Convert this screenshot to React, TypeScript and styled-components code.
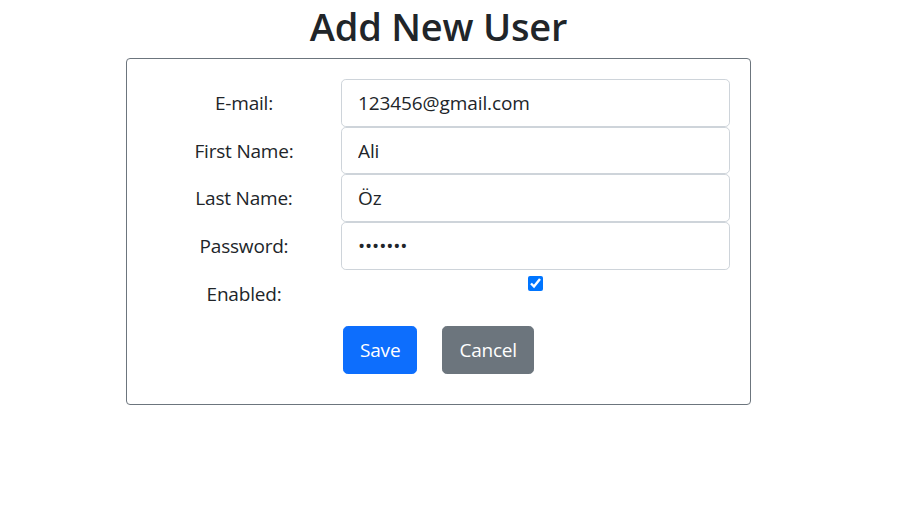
import React from "react";
import styled, { createGlobalStyle } from "styled-components";

const GlobalStyle = createGlobalStyle`
  html, body { margin: 0; padding: 0; background: #fff; }
  body {
    font-family: "Open Sans", "Noto Sans", "Liberation Sans", sans-serif;
    color: #212529;
  }
  * { box-sizing: border-box; }
`;

const Wrapper = styled.div`
  width: 625px;
  margin-left: 126px;
`;

const Title = styled.h1`
  margin: 0 0 6px;
  font-size: 38px;
  font-weight: 600;
  line-height: 52px;
  text-align: center;
  letter-spacing: -0.2px;
`;

const Card = styled.form`
  border: 1px solid #6c757d;
  border-radius: 4px;
  padding: 20px 20px 20px;
`;

const FormRow = styled.div`
  display: grid;
  grid-template-columns: 194px 1fr;
`;

const Label = styled.label`
  display: block;
  font-size: 19px;
  line-height: 30px;
  padding: 9px 0 8px;
  text-align: center;
  letter-spacing: -0.2px;
`;

const Input = styled.input`
  display: block;
  width: 100%;
  height: 47.7px;
  padding: 8px 16px;
  font-family: inherit;
  font-size: 19px;
  color: #212529;
  border: 1px solid #ced4da;
  border-radius: 4.8px;
  background: #fff;
  outline: none;
  letter-spacing: -0.1px;
`;

const CheckCell = styled.div`
  display: flex;
  justify-content: center;
  align-items: flex-start;
  padding-top: 6px;
`;

const Check = styled.input`
  width: 15px;
  height: 15px;
  margin: 0 0 0 -1px;
`;

const Actions = styled.div`
  display: flex;
  justify-content: center;
  gap: 25px;
  margin: 9px 0 10px;
`;

const Button = styled.button<{ $variant: "primary" | "secondary" }>`
  font-family: inherit;
  font-size: 19px;
  line-height: 30px;
  padding: 8px 16px;
  color: #fff;
  border: 1px solid ${(p) => (p.$variant === "primary" ? "#0d6efd" : "#6c757d")};
  background: ${(p) => (p.$variant === "primary" ? "#0d6efd" : "#6c757d")};
  border-radius: 4.8px;
  cursor: pointer;
  letter-spacing: -0.2px;
`;

const fields = [
  { label: "E-mail:", type: "email", value: "123456@gmail.com" },
  { label: "First Name:", type: "text", value: "Ali" },
  { label: "Last Name:", type: "text", value: "Öz" },
  { label: "Password:", type: "password", value: "1234567" },
];

export default function App() {
  return (
    <>
      <GlobalStyle />
      <Wrapper>
        <Title>Add New User</Title>
        <Card onSubmit={(e) => e.preventDefault()}>
          {fields.map((f) => (
            <FormRow key={f.label}>
              <Label>{f.label}</Label>
              <Input type={f.type} defaultValue={f.value} />
            </FormRow>
          ))}
          <FormRow>
            <Label>Enabled:</Label>
            <CheckCell>
              <Check type="checkbox" defaultChecked />
            </CheckCell>
          </FormRow>
          <Actions>
            <Button type="submit" $variant="primary">Save</Button>
            <Button type="button" $variant="secondary">Cancel</Button>
          </Actions>
        </Card>
      </Wrapper>
    </>
  );
}
